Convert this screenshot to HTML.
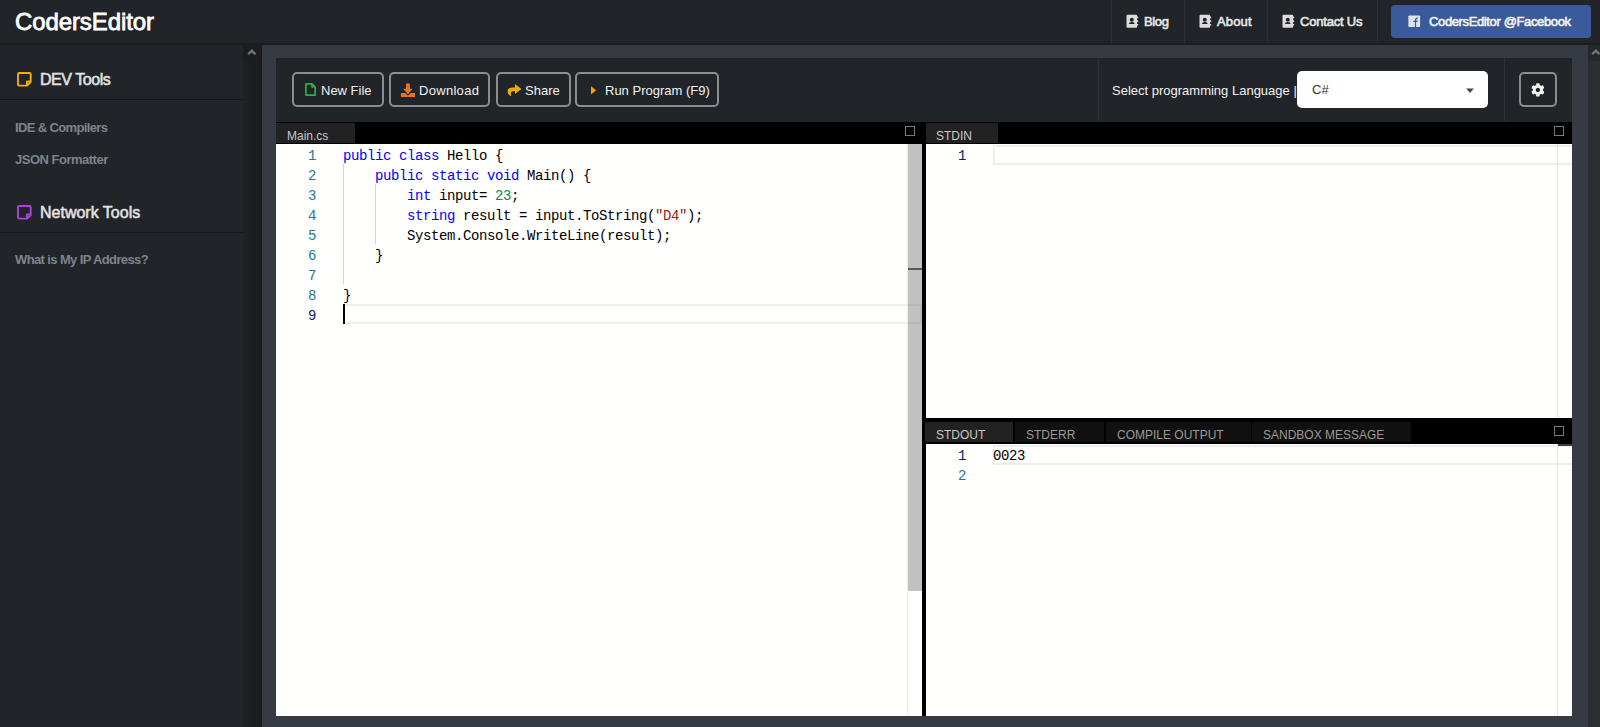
<!DOCTYPE html>
<html><head><meta charset="utf-8">
<style>
*{margin:0;padding:0;box-sizing:border-box}
html,body{width:1600px;height:727px;overflow:hidden;background:#353a43;font-family:"Liberation Sans",sans-serif}
.abs{position:absolute}
#hdr{left:0;top:0;width:1600px;height:45px;background:#212428;border-bottom:2px solid #1a1c1f}
#logo{left:15px;top:8px;font:24px/28px "Liberation Sans",sans-serif;color:#fff;letter-spacing:-0.1px;-webkit-text-stroke:0.8px #fff}
.nav{top:0;height:43px;border-left:1px solid #2c2f34;color:#e6e6e6;font:bold 13px/43px "Liberation Sans",sans-serif}
.nav span{position:absolute;top:0;white-space:nowrap}
#fb{left:1391px;top:5px;width:200px;height:33px;background:#3b5a9a;border-radius:4px;color:#f2f2f2;font:bold 13px/33px "Liberation Sans",sans-serif}
#side{left:0;top:45px;width:262px;height:682px;background:#212428}
#sidetrack{left:243px;top:45px;width:18px;height:682px;background:linear-gradient(90deg,#1d2024,#191c1f)}
#sideborder{left:261px;top:45px;width:1px;height:682px;background:#15171a}
.sh{left:0;width:243px;height:1px;background:#15171a}
.stitle{color:#e2e2e2;font:16px/20px "Liberation Sans",sans-serif;white-space:nowrap;-webkit-text-stroke:0.55px #e2e2e2}
.slink{color:#7d848c;font:bold 13px/16px "Liberation Sans",sans-serif;white-space:nowrap}
#pscroll{left:1588px;top:45px;width:12px;height:682px;background:#2a2d32}
#panel{left:276px;top:58px;width:1296px;height:658px;background:#000}
#toolbar{left:276px;top:58px;width:1296px;height:64px;background:#212428}
.btn{top:72px;height:35px;border:2px solid #8d8d8d;border-radius:5px;color:#f2f2f2;font:13px/31px "Liberation Sans",sans-serif;white-space:nowrap}
.btn span{position:absolute;top:0}
.vdiv{top:58px;width:1px;height:64px;background:#2e3136}
#sel{left:1297px;top:71px;width:191px;height:37px;background:#fff;border-radius:5px}
#gear{left:1519px;top:72px;width:38px;height:35px;border:2px solid #8d8d8d;border-radius:5px}
.tab{height:20px;background:#222;color:#c8c8c8;font:12px/26px "Liberation Sans",sans-serif;white-space:nowrap;padding-left:11px}
.tab.in{background:#111;color:#9a9a9a}
.maxi{width:10px;height:10px;border:1px solid #7a7a7a}
.ed{background:#fffffe;overflow:hidden}
.code{font:14px/20px "Liberation Mono",monospace;letter-spacing:-0.4px;white-space:pre;color:#000}
.ln{color:#237893;font:14px/20px "Liberation Mono",monospace;text-align:right;letter-spacing:-0.4px}
.kw{color:#0000ff}.num{color:#098658}.str{color:#a31515}
</style></head><body>
<!-- header -->
<div id="hdr" class="abs"></div>
<div id="logo" class="abs">CodersEditor</div>
<div class="abs nav" style="left:1111px;width:73px"></div>
<div class="abs nav" style="left:1184px;width:83px"></div>
<div class="abs nav" style="left:1267px;width:111px;border-right:1px solid #2c2f34"></div>
<div class="abs" style="left:1144px;top:14px;color:#e6e6e6;font:13px/16px 'Liberation Sans',sans-serif;letter-spacing:-0.35px;-webkit-text-stroke:0.6px #e6e6e6">Blog</div>
<div class="abs" style="left:1217px;top:14px;color:#e6e6e6;font:13px/16px 'Liberation Sans',sans-serif;letter-spacing:0.15px;-webkit-text-stroke:0.6px #e6e6e6">About</div>
<div class="abs" style="left:1300px;top:14px;color:#e6e6e6;font:13px/16px 'Liberation Sans',sans-serif;letter-spacing:-0.2px;-webkit-text-stroke:0.6px #e6e6e6">Contact Us</div>
<div id="fb" class="abs"></div>
<div class="abs" style="left:1429px;top:14px;color:#f2f2f2;font:13px/16px 'Liberation Sans',sans-serif;letter-spacing:-0.37px;-webkit-text-stroke:0.6px #f2f2f2">CodersEditor @Facebook</div>

<!-- sidebar -->
<div id="side" class="abs"></div>
<div id="sidetrack" class="abs"></div>
<div id="sideborder" class="abs"></div>
<div class="abs stitle" style="left:40px;top:70px;letter-spacing:-0.45px">DEV Tools</div>
<div class="abs sh" style="top:99px"></div>
<div class="abs slink" style="left:15px;top:120px;letter-spacing:-0.64px">IDE &amp; Compilers</div>
<div class="abs slink" style="left:15px;top:152px;letter-spacing:-0.5px">JSON Formatter</div>
<div class="abs stitle" style="left:40px;top:203px;letter-spacing:0px">Network Tools</div>
<div class="abs sh" style="top:232px"></div>
<div class="abs slink" style="left:15px;top:252px;letter-spacing:-0.62px">What is My IP Address?</div>

<!-- page scrollbar -->
<div id="pscroll" class="abs"></div>

<!-- panel -->
<div id="panel" class="abs"></div>
<div id="toolbar" class="abs"></div>
<div class="abs btn" style="left:292px;width:92px"></div>
<div class="abs btn" style="left:389px;width:101px"></div>
<div class="abs btn" style="left:496px;width:74.5px"></div>
<div class="abs btn" style="left:575px;width:144px"></div>
<div class="abs" style="left:321px;top:83px;color:#f2f2f2;font:13px/16px 'Liberation Sans',sans-serif">New File</div>
<div class="abs" style="left:419px;top:83px;color:#f2f2f2;font:13px/16px 'Liberation Sans',sans-serif;letter-spacing:0.3px">Download</div>
<div class="abs" style="left:525px;top:83px;color:#f2f2f2;font:13px/16px 'Liberation Sans',sans-serif">Share</div>
<div class="abs" style="left:605px;top:83px;color:#f2f2f2;font:13px/16px 'Liberation Sans',sans-serif">Run Program (F9)</div>
<div class="abs vdiv" style="left:1098px"></div>
<div class="abs vdiv" style="left:1504px"></div>
<div class="abs" style="left:1112px;top:83px;color:#f2f2f2;font:13px/16px 'Liberation Sans',sans-serif;white-space:pre">Select programming Language |</div>
<div id="sel" class="abs"></div>
<div class="abs" style="left:1312px;top:82px;color:#333;font:13px/16px 'Liberation Sans',sans-serif">C#</div>
<div id="gear" class="abs"></div>

<!-- tabs -->
<div class="abs tab" style="left:276px;top:123px;width:79px;padding-left:11px">Main.cs</div>
<div class="abs tab" style="left:926px;top:123px;width:72px;padding-left:10px">STDIN</div>
<div class="abs tab" style="left:925px;top:422px;width:88px">STDOUT</div>
<div class="abs tab in" style="left:1015px;top:422px;width:89px">STDERR</div>
<div class="abs tab in" style="left:1106px;top:422px;width:145px">COMPILE OUTPUT</div>
<div class="abs tab in" style="left:1252px;top:422px;width:159px">SANDBOX MESSAGE</div>
<div class="abs maxi" style="left:905px;top:126px"></div>
<div class="abs maxi" style="left:1554px;top:126px"></div>
<div class="abs maxi" style="left:1554px;top:426px"></div>

<!-- editors -->
<div class="abs ed" style="left:276px;top:144px;width:646px;height:572px"></div>
<div class="abs ed" style="left:926px;top:144px;width:646px;height:274px"></div>
<div class="abs ed" style="left:926px;top:444px;width:646px;height:272px"></div>



<!-- main editor internals -->
<div class="abs" style="left:343px;top:164px;width:1px;height:120px;background:#d3d3d3"></div>
<div class="abs" style="left:375px;top:184px;width:1px;height:60px;background:#d3d3d3"></div>
<div class="abs" style="left:345px;top:304px;width:577px;height:20px;border:2px solid #eeeeee;border-left:0"></div>
<div class="abs" style="left:343px;top:304px;width:2px;height:20px;background:#000"></div>
<div class="abs code" style="left:343px;top:146px"><span class="kw">public</span> <span class="kw">class</span> Hello {</div>
<div class="abs ln" style="left:276px;top:146px;width:40px;color:#237893">1</div>
<div class="abs code" style="left:343px;top:166px">    <span class="kw">public</span> <span class="kw">static</span> <span class="kw">void</span> Main() {</div>
<div class="abs ln" style="left:276px;top:166px;width:40px;color:#237893">2</div>
<div class="abs code" style="left:343px;top:186px">        <span class="kw">int</span> input= <span class="num">23</span>;</div>
<div class="abs ln" style="left:276px;top:186px;width:40px;color:#237893">3</div>
<div class="abs code" style="left:343px;top:206px">        <span class="kw">string</span> result = input.ToString(<span class="str">"D4"</span>);</div>
<div class="abs ln" style="left:276px;top:206px;width:40px;color:#237893">4</div>
<div class="abs code" style="left:343px;top:226px">        System.Console.WriteLine(result);</div>
<div class="abs ln" style="left:276px;top:226px;width:40px;color:#237893">5</div>
<div class="abs code" style="left:343px;top:246px">    }</div>
<div class="abs ln" style="left:276px;top:246px;width:40px;color:#237893">6</div>
<div class="abs code" style="left:343px;top:266px"></div>
<div class="abs ln" style="left:276px;top:266px;width:40px;color:#237893">7</div>
<div class="abs code" style="left:343px;top:286px">}</div>
<div class="abs ln" style="left:276px;top:286px;width:40px;color:#237893">8</div>
<div class="abs code" style="left:343px;top:306px"></div>
<div class="abs ln" style="left:276px;top:306px;width:40px;color:#0b216f">9</div>

<div class="abs" style="left:907px;top:144px;width:1px;height:572px;background:#ececec"></div>
<div class="abs" style="left:908px;top:144px;width:14px;height:447px;background:rgba(100,100,100,0.4)"></div>
<div class="abs" style="left:908px;top:268px;width:14px;height:2px;background:#5a5a5a"></div>
<!-- stdin internals -->
<div class="abs" style="left:993px;top:145px;width:579px;height:19.5px;border:2px solid #eeeeee;border-right:0"></div>
<div class="abs ln" style="left:926px;top:146px;width:40px;color:#0b216f">1</div>
<div class="abs" style="left:1557px;top:144px;width:1px;height:274px;background:#e6e6e6"></div>
<!-- stdout internals -->
<div class="abs" style="left:993px;top:445px;width:579px;height:19.5px;border:2px solid #eeeeee;border-right:0"></div>
<div class="abs ln" style="left:926px;top:446px;width:40px;color:#0b216f">1</div>
<div class="abs ln" style="left:926px;top:466px;width:40px">2</div>
<div class="abs code" style="left:993px;top:446px">0023</div>
<div class="abs" style="left:1557px;top:444px;width:1px;height:272px;background:#e6e6e6"></div>
<div class="abs" style="left:1558px;top:444px;width:14px;height:2px;background:#3c3c3c"></div>
<!-- sidebar icons -->
<svg class="abs" style="left:16px;top:71px" width="16" height="16" viewBox="0 0 16 16"><path d="M2,3.2 Q2,2 3.2,2 H13.5 Q14.7,2 14.7,3.2 V11 L11.1,14.6 H3.2 Q2,14.6 2,13.4 Z M10.9,14.6 V10.4 H14.7" fill="none" stroke="#f0b000" stroke-width="1.9" stroke-linejoin="round"/></svg>
<svg class="abs" style="left:16px;top:204px" width="16" height="16" viewBox="0 0 16 16"><path d="M2,3.2 Q2,2 3.2,2 H13.5 Q14.7,2 14.7,3.2 V11 L11.1,14.6 H3.2 Q2,14.6 2,13.4 Z M10.9,14.6 V10.4 H14.7" fill="none" stroke="#b040d8" stroke-width="1.9" stroke-linejoin="round"/></svg>
<!-- sidebar scroll arrow -->
<div class="abs" style="left:243px;top:45px;width:18px;height:16px;background:#1b1d21"></div>
<svg class="abs" style="left:243px;top:44px" width="18" height="17" viewBox="0 0 18 17"><path d="M5.2,10.2 L8.8,6.6 L12.4,10.2" fill="none" stroke="#777" stroke-width="2.2"/></svg>
<!-- page scroll arrow -->
<div class="abs" style="left:1588px;top:45px;width:12px;height:16px;background:#25282c"></div>
<svg class="abs" style="left:1588px;top:44px" width="12" height="17" viewBox="0 0 12 17"><path d="M4.2,10.2 L7.8,6.6 L11.4,10.2" fill="none" stroke="#777" stroke-width="2.2"/></svg>
<!-- header icons -->
<svg class="abs" style="left:1126px;top:14px" width="14" height="15" viewBox="0 0 14 15"><rect x="0.5" y="0.8" width="10.6" height="13" rx="1" fill="#dcdcdc"/><rect x="10.4" y="2.6" width="1.9" height="1.6" rx=".6" fill="#dcdcdc"/><rect x="10.4" y="6.3" width="1.9" height="1.6" rx=".6" fill="#dcdcdc"/><rect x="10.4" y="10" width="1.9" height="1.6" rx=".6" fill="#dcdcdc"/><circle cx="5.8" cy="5.7" r="2" fill="#212428"/><path d="M2.9,10.1 Q3,8.1 5.8,8.1 Q8.6,8.1 8.7,10.1 Z" fill="#212428"/></svg>
<svg class="abs" style="left:1199px;top:14px" width="14" height="15" viewBox="0 0 14 15"><rect x="0.5" y="0.8" width="10.6" height="13" rx="1" fill="#dcdcdc"/><rect x="10.4" y="2.6" width="1.9" height="1.6" rx=".6" fill="#dcdcdc"/><rect x="10.4" y="6.3" width="1.9" height="1.6" rx=".6" fill="#dcdcdc"/><rect x="10.4" y="10" width="1.9" height="1.6" rx=".6" fill="#dcdcdc"/><circle cx="5.8" cy="5.7" r="2" fill="#212428"/><path d="M2.9,10.1 Q3,8.1 5.8,8.1 Q8.6,8.1 8.7,10.1 Z" fill="#212428"/></svg>
<svg class="abs" style="left:1282px;top:14px" width="14" height="15" viewBox="0 0 14 15"><rect x="0.5" y="0.8" width="10.6" height="13" rx="1" fill="#dcdcdc"/><rect x="10.4" y="2.6" width="1.9" height="1.6" rx=".6" fill="#dcdcdc"/><rect x="10.4" y="6.3" width="1.9" height="1.6" rx=".6" fill="#dcdcdc"/><rect x="10.4" y="10" width="1.9" height="1.6" rx=".6" fill="#dcdcdc"/><circle cx="5.8" cy="5.7" r="2" fill="#212428"/><path d="M2.9,10.1 Q3,8.1 5.8,8.1 Q8.6,8.1 8.7,10.1 Z" fill="#212428"/></svg>
<svg class="abs" style="left:1408px;top:15px" width="13" height="13" viewBox="0 0 13 13"><rect x="0.4" y="0.5" width="11.7" height="11.5" rx="0.8" fill="#dfe3ec"/><path d="M7.5,12 V5.3 Q7.5,3.2 9.8,3.2 M5.3,6.3 H9.8" fill="none" stroke="#3b5a9a" stroke-width="1.2"/></svg>
<!-- toolbar icons -->
<svg class="abs" style="left:304px;top:82px" width="13" height="15" viewBox="0 0 13 15"><path d="M1.9,1.8 H8 L11.2,5 V13.1 H1.9 Z M8,1.8 V5 H11.2" fill="none" stroke="#27b33e" stroke-width="1.7" stroke-linejoin="round"/></svg>
<svg class="abs" style="left:400px;top:83px" width="16" height="15" viewBox="0 0 16 15"><path d="M6,0.6 H9.9 V5.8 H12.8 L7.95,11.3 L3.1,5.8 H6 Z" fill="#e8731e"/><path d="M0.9,9.9 H5.2 L7.95,12.6 L10.7,9.9 H15 V13.9 H0.9 Z" fill="#e8731e"/></svg>
<svg class="abs" style="left:507px;top:83px" width="16" height="14" viewBox="0 0 16 14"><path d="M8,1 L14.4,6 L8,11 V8.3 H5.6 Q3.8,8.3 3.9,10.4 V13.2 Q0.5,11.2 0.5,8.3 Q0.5,4.4 5.6,4.4 H8 Z" fill="#e8ae0c"/></svg>
<svg class="abs" style="left:590px;top:85px" width="8" height="11" viewBox="0 0 8 11"><path d="M1,1.2 L6.2,5.3 L1,9.4 Z" fill="#f0a30a"/></svg>
<svg class="abs" style="left:1464px;top:86px" width="12" height="9" viewBox="0 0 12 9"><path d="M2.2,2.4 H9.8 L6,7 Z" fill="#444"/></svg>
<svg class="abs" style="left:1530.5px;top:83.3px" width="13.8" height="13.8" viewBox="0 0 512 512"><path fill="#f4f4f4" fill-rule="evenodd" d="M487.4 315.7l-42.6-24.6c4.3-23.2 4.3-47 0-70.2l42.6-24.6c4.9-2.8 7.1-8.6 5.5-14-11.1-35.6-30-67.8-54.7-94.6-3.8-4.1-10-5.1-14.8-2.3L380.8 110c-17.9-15.4-38.5-27.3-60.8-35.1V25.8c0-5.6-3.9-10.5-9.4-11.7-36.7-8.2-74.300-7.8-109.2 0-5.5 1.2-9.4 6.1-9.4 11.7V75c-22.2 7.9-42.8 19.8-60.8 35.1L88.7 85.5c-4.9-2.8-11-1.9-14.8 2.3-24.7 26.7-43.6 58.9-54.7 94.6-1.700 5.4.6 11.2 5.5 14L67.3 221c-4.3 23.2-4.3 47 0 70.2l-42.6 24.6c-4.9 2.8-7.1 8.6-5.5 14 11.1 35.6 30 67.8 54.7 94.6 3.8 4.1 10 5.1 14.8 2.3l42.6-24.6c17.9 15.4 38.5 27.3 60.8 35.1v49.2c0 5.6 3.9 10.5 9.4 11.7 36.7 8.2 74.3 7.8 109.2 0 5.5-1.2 9.4-6.1 9.4-11.7v-49.2c22.2-7.9 42.8-19.8 60.8-35.1l42.6 24.6c4.9 2.8 11 1.9 14.8-2.3 24.7-26.7 43.6-58.9 54.7-94.6 1.5-5.5-.7-11.3-5.6-14.1zM256 336c-44.1 0-80-35.9-80-80s35.9-80 80-80 80 35.9 80 80-35.9 80-80 80z"/></svg>
</body></html>
